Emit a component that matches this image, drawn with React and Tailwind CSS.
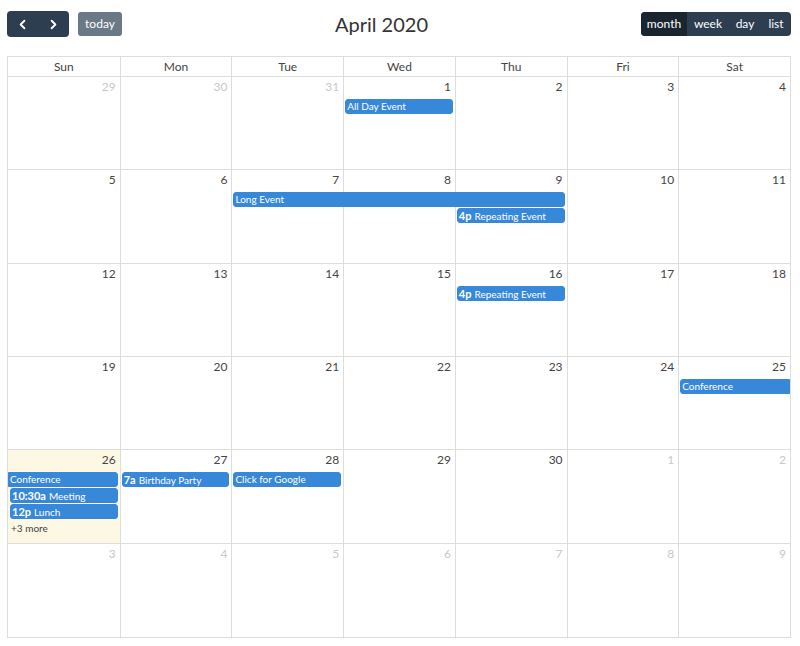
import { ChevronLeft, ChevronRight } from "lucide-react";

const DAYS = ["Sun", "Mon", "Tue", "Wed", "Thu", "Fri", "Sat"];

// each week: 7 day numbers, flag for other month, events with col/span/row
const WEEKS = [
  {
    days: [29, 30, 31, 1, 2, 3, 4],
    other: [true, true, true, false, false, false, false],
    events: [{ col: 4, span: 1, row: 1, title: "All Day Event" }],
  },
  {
    days: [5, 6, 7, 8, 9, 10, 11],
    events: [
      { col: 3, span: 3, row: 1, title: "Long Event" },
      { col: 5, span: 1, row: 2, time: "4p", title: "Repeating Event" },
    ],
  },
  {
    days: [12, 13, 14, 15, 16, 17, 18],
    events: [{ col: 5, span: 1, row: 1, time: "4p", title: "Repeating Event" }],
  },
  {
    days: [19, 20, 21, 22, 23, 24, 25],
    events: [{ col: 7, span: 1, row: 1, title: "Conference", noEnd: true }],
  },
  {
    days: [26, 27, 28, 29, 30, 1, 2],
    other: [false, false, false, false, false, true, true],
    today: 0,
    events: [
      { col: 1, span: 1, row: 1, title: "Conference", noStart: true },
      { col: 1, span: 1, row: 2, time: "10:30a", title: "Meeting" },
      { col: 1, span: 1, row: 3, time: "12p", title: "Lunch" },
      { col: 2, span: 1, row: 1, time: "7a", title: "Birthday Party" },
      { col: 3, span: 1, row: 1, title: "Click for Google" },
    ],
    more: { col: 1, row: 4, label: "+3 more" },
  },
  {
    days: [3, 4, 5, 6, 7, 8, 9],
    other: [true, true, true, true, true, true, true],
    events: [],
  },
];

const COL_START = {
  1: "col-start-1",
  2: "col-start-2",
  3: "col-start-3",
  4: "col-start-4",
  5: "col-start-5",
  6: "col-start-6",
  7: "col-start-7",
};
const COL_SPAN = { 1: "col-span-1", 2: "col-span-2", 3: "col-span-3" };
const ROW_START = { 1: "row-start-2", 2: "row-start-3", 3: "row-start-4", 4: "row-start-5" };

function Event({ ev }) {
  const margin = ev.noStart
    ? "ml-0 mr-[2px] rounded-r-[3px]"
    : ev.noEnd
    ? "ml-[2px] mr-0 rounded-l-[3px]"
    : "mx-[2px] rounded-[3px]";
  return (
    <div
      className={`${COL_START[ev.col]} ${COL_SPAN[ev.span]} ${ROW_START[ev.row]} ${margin} z-10 h-[15px] bg-[#3788d8] border border-[#3788d8] text-white text-[10px] leading-[13px] pl-[1px] whitespace-nowrap overflow-hidden`}
    >
      {ev.time && <span className="font-bold mr-[3px] text-[11px]">{ev.time}</span>}
      {ev.title}
    </div>
  );
}

function Week({ week, last }) {
  return (
    <div
      className={`grid grid-cols-7 grid-rows-[22px_16px_16px_16px_16px_1fr] ${last ? "" : "border-b border-[#ddd]"}`}
    >
      {week.days.map((d, i) => (
        <div
          key={"bg" + i}
          className={`${COL_START[i + 1]} row-start-1 row-end-7 ${i > 0 ? "border-l border-[#ddd]" : ""} ${week.today === i ? "bg-[#fcf8e3]" : ""}`}
        />
      ))}
      {week.days.map((d, i) => (
        <div
          key={"n" + i}
          className={`${COL_START[i + 1]} row-start-1 z-10 text-right pr-[4px] pt-[2px] text-[12px] leading-[16px] ${week.other && week.other[i] ? "text-[#c8c8c8]" : "text-[#444]"}`}
        >
          {d}
        </div>
      ))}
      {week.events.map((ev, i) => (
        <Event key={i} ev={ev} />
      ))}
      {week.more && (
        <div className={`${COL_START[week.more.col]} ${ROW_START[week.more.row]} z-10 pl-[3px] text-[10px] leading-[16px] text-[#444]`}>
          {week.more.label}
        </div>
      )}
    </div>
  );
}

export default function App() {
  return (
    <div className="w-[800px] h-[646px] bg-white font-['Lato','Noto_Sans',sans-serif] text-[#333]">
      <div className="ml-[7px] w-[784px] pt-[11px]">
        {/* toolbar */}
        <div className="flex items-center justify-between h-[26px] mb-[19px]">
          <div className="flex items-center gap-[9px]">
            <div className="flex h-[26px] rounded-[4px] bg-[#2c3e50] overflow-hidden">
              <button className="w-[31px] flex items-center justify-center text-white">
                <ChevronLeft size={15} strokeWidth={3} />
              </button>
              <button className="w-[31px] flex items-center justify-center text-white">
                <ChevronRight size={15} strokeWidth={3} />
              </button>
            </div>
            <button className="h-[24px] w-[44px] rounded-[3px] bg-[#6b7886] text-white text-[12px]">
              today
            </button>
          </div>
          <h2 className="text-[20px] text-[#333] leading-none">April 2020</h2>
          <div className="flex h-[24px] rounded-[4px] bg-[#2c3e50] overflow-hidden text-white text-[12px]">
            <button className="w-[46px] bg-[#1a252f]">month</button>
            <button className="w-[42px]">week</button>
            <button className="w-[32px]">day</button>
            <button className="w-[30px]">list</button>
          </div>
        </div>

        {/* table */}
        <div className="w-[784px] border border-[#ddd]">
          <div className="grid grid-cols-7 h-[20px] border-b border-[#ddd]">
            {DAYS.map((d, i) => (
              <div
                key={d}
                className={`text-center text-[12px] leading-[19px] text-[#444] ${i > 0 ? "border-l border-[#ddd]" : ""}`}
              >
                {d}
              </div>
            ))}
          </div>
          <div className="grid grid-rows-6 h-[560px]">
            {WEEKS.map((w, i) => (
              <Week key={i} week={w} last={i === WEEKS.length - 1} />
            ))}
          </div>
        </div>
      </div>
    </div>
  );
}
